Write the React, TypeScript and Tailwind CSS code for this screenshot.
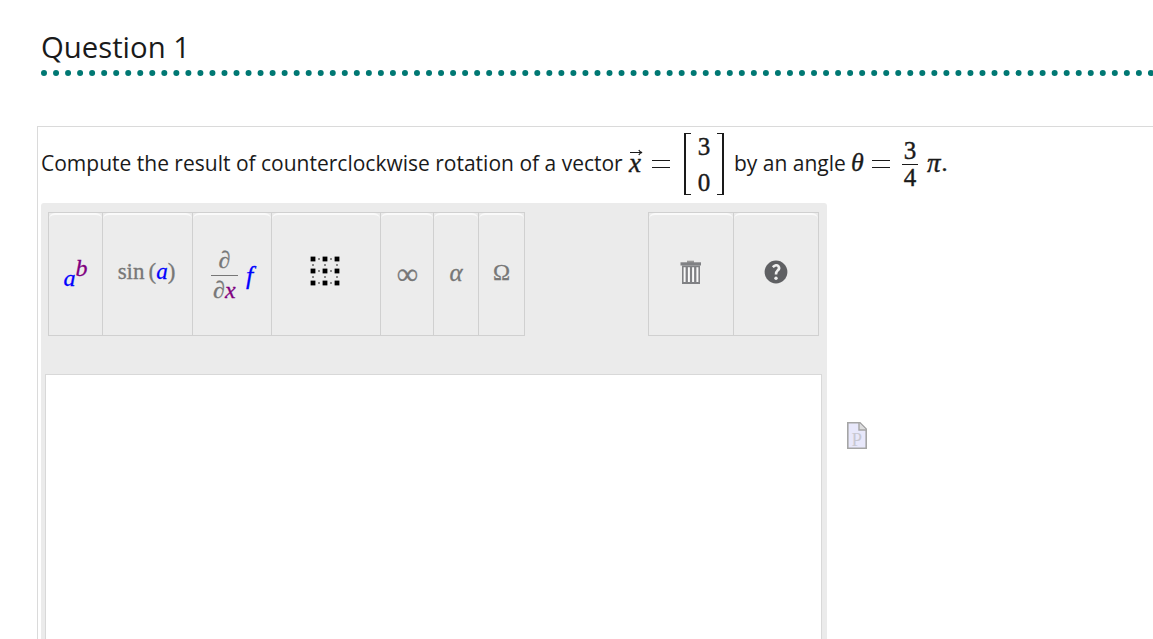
import type { ReactNode } from 'react';

// --- HELPER COMPONENTS ---
function ToolButton({ className, children }: { className: string; children: ReactNode }) {
  return (
    <button className={`h-[124px] shrink-0 border border-l-0 border-[#d0d0d0] first:border-l ${className}`}>
      <span className="flex h-full w-full items-center justify-center rounded-t-[6px] border-t-2 border-[#fafafa] bg-[#ececec] pb-[6px]">
        {children}
      </span>
    </button>
  );
}

function Vector() {
  return (
    <span className="flex h-[62px] w-[40px] justify-between">
      <span className="w-[7px] border-[1.5px] border-r-0 border-l-2 border-[#1a1a1a]" />
      <span className="flex flex-col justify-between pt-px text-[25px] leading-[26px] [-webkit-text-stroke:0.4px_#1a1a1a]">
        <span>3</span>
        <span className="-mb-px">0</span>
      </span>
      <span className="w-[7px] border-[1.5px] border-r-2 border-l-0 border-[#1a1a1a]" />
    </span>
  );
}

function Equals() {
  return <span className="mt-[33px] block h-[8px] w-[18px] shrink-0 border-y border-[#1a1a1a]" />;
}

function GridIcon() {
  const steps = [0, 1, 2, 3, 4];
  return (
    <svg width="30" height="30" viewBox="0 0 30 30" className="mr-[2px] mb-[2px]">
      {steps.map((r) =>
        steps.map((c) => {
          if (r % 2 === 0 && c % 2 === 0) {
            return <rect key={`${r}-${c}`} x={c * 6 + 0.6} y={r * 6 + 0.6} width="4.8" height="4.8" fill="#000" />;
          }
          if (r % 2 === 1 && c % 2 === 1) return null;
          return <rect key={`${r}-${c}`} x={c * 6 + 2} y={r * 6 + 2} width="2" height="2" fill="#888" />;
        }),
      )}
    </svg>
  );
}

function TrashIcon() {
  return (
    <svg width="22" height="25" viewBox="0 0 22 25">
      <path d="M7 3V.7h7V3" fill="#999" />
      <rect x="0.5" y="2.3" width="20.5" height="3.2" fill="#808184" />
      <rect x="2" y="5.5" width="18" height="18.5" fill="#808184" />
      <path d="M4.6 7.3V22M8.9 7.3V22M13.1 7.3V22M17.4 7.3V22" stroke="#fafafa" strokeWidth="2" />
    </svg>
  );
}

function HelpIcon() {
  return (
    <svg width="24" height="24" viewBox="0 0 24 24" className="mr-px mb-px">
      <circle cx="12" cy="12" r="11.4" fill="#5f6063" />
      <path d="M8.8 7.2Q12.2 3.8 14.4 6.2Q16.2 8.4 13.6 10.6Q12 12 12 14.6" fill="none" stroke="#efefef" strokeWidth="2.6" />
      <circle cx="12" cy="18.2" r="1.7" fill="#efefef" />
    </svg>
  );
}

function PreviewIcon() {
  return (
    <svg width="20" height="27" viewBox="0 0 20 27">
      <path d="M.8.8H13L19.2 7V26.2H.8Z" fill="#e8e8fb" stroke="#a5a5a5" strokeWidth="1.6" />
      <path d="M12 1V8H19" fill="#ddd" stroke="#a5a5a5" strokeWidth="1.4" />
      <text x="4.5" y="23.5" fontSize="19" fill="#c8c8d2" fontFamily="Liberation Serif, serif">P</text>
    </svg>
  );
}

// --- MAIN PAGE COMPONENT ---
export default function App() {
  return (
    <div className="h-[639px] w-full overflow-hidden bg-white pt-[28px] font-['Open_Sans',sans-serif] text-[#1a1a1a]">
      {/* Heading */}
      <div className="ml-[41px] h-[48px] w-[1162px] border-b-6 border-dotted border-[#007873]">
        <h1 className="text-[29.3px] leading-[39px]">Question 1</h1>
      </div>

      {/* Question */}
      <div className="mt-[50px] ml-[37px] h-[540px] w-[1200px] border border-[#dadada] pl-[3px]">
        <div className="flex h-[76px] items-start text-[21px] leading-[28px] whitespace-nowrap">
          <p className="mt-[22px] w-[588px] shrink-0">Compute the result of counterclockwise rotation of a vector</p>
          <div className="flex shrink-0 items-start font-['Liberation_Serif',serif]">
            <span className="mt-[22px] flex w-[23px] flex-col">
              <svg width="13" height="7" viewBox="0 0 14 7" className="ml-px">
                <path d="M0 3.5H12M9.5 .8Q10.5 3 13 3.5Q10.5 4 9.5 6.2" fill="none" stroke="#1a1a1a" strokeWidth="1.3" />
              </svg>
              <span className="-mt-[6px] text-[27px] leading-[26px] italic [-webkit-text-stroke:0.4px_#1a1a1a]">x</span>
            </span>
            <span className="w-[32px]"><Equals /></span>
            <span className="mt-[6px] w-[50px]"><Vector /></span>
          </div>
          <p className="mt-[22px] w-[117px] shrink-0">by an angle</p>
          <div className="flex shrink-0 items-start font-['Liberation_Serif',serif]">
            <span className="mt-[22px] w-[21px] text-[26px] leading-[28px] italic [-webkit-text-stroke:0.3px_#1a1a1a]">θ</span>
            <span className="w-[30px]"><Equals /></span>
            <span className="mt-[11px] flex w-[16px] flex-col items-center text-[25px] [-webkit-text-stroke:0.4px_#1a1a1a]">
              <span className="h-[27px] w-full border-b border-[#1a1a1a] text-center leading-[26px]">3</span>
              <span className="leading-[26px]">4</span>
            </span>
            <span className="mt-[22px] ml-[9px] text-[27px] leading-[28px] italic [-webkit-text-stroke:0.4px_#1a1a1a]">π</span>
            <span className="mt-[22px] ml-px text-[24px] leading-[28px] [-webkit-text-stroke:0.5px_#1a1a1a]">.</span>
          </div>
        </div>

        {/* Equation editor */}
        <div className="flex">
          <div className="h-[460px] w-[786px] shrink-0 rounded-[3px] bg-[#ebebeb] px-[4px] pt-[9px]">
            <div className="flex justify-between pr-[4px] pl-[3px] font-['Liberation_Serif',serif] text-[#777] [text-shadow:1px_1px_0_#fff]">
              <div className="flex">
                <ToolButton className="w-[55px]">
                  <span className="flex items-start pt-[6px] text-[24px] leading-[24px] italic [-webkit-text-stroke:0.3px]">
                    <span className="mt-[5px] text-[#0000ff]">a</span>
                    <span className="-mt-[5px] text-[#800080]">b</span>
                  </span>
                </ToolButton>
                <ToolButton className="w-[90px]">
                  <span className="pt-px pr-[2px] text-[23px] [-webkit-text-stroke:0.3px]">
                    sin<span className="ml-[4px]">(</span>
                    <span className="text-[#0000ff] italic">a</span>)
                  </span>
                </ToolButton>
                <ToolButton className="w-[79px]">
                  <span className="flex items-center gap-[8px] pt-[7px] [-webkit-text-stroke:0.3px]">
                    <span className="flex w-[27px] flex-col items-center text-[24px] leading-[29px]">
                      <span className="w-full border-b border-[#777]">∂</span>
                      <span>∂<i className="text-[#800080]">x</i></span>
                    </span>
                    <i className="text-[26px] text-[#0000ff]">f</i>
                  </span>
                </ToolButton>
                <ToolButton className="w-[109px]"><GridIcon /></ToolButton>
                <ToolButton className="w-[53px]"><span className="pt-[2px] pl-px text-[30px] [-webkit-text-stroke:0.3px]">∞</span></ToolButton>
                <ToolButton className="w-[45px]"><i className="pt-[2px] text-[25px] [-webkit-text-stroke:0.3px]">α</i></ToolButton>
                <ToolButton className="w-[46px]"><span className="pt-[2px] text-[23px] [-webkit-text-stroke:0.3px]">Ω</span></ToolButton>
              </div>
              <div className="flex">
                <ToolButton className="w-[86px]"><TrashIcon /></ToolButton>
                <ToolButton className="w-[85px]"><HelpIcon /></ToolButton>
              </div>
            </div>
            <div className="mt-[38px] h-[300px] w-[777px] border border-[#d8d8d8] bg-white" />
          </div>
          <div className="mt-[219px] ml-[20px]"><PreviewIcon /></div>
        </div>
      </div>
    </div>
  );
}
